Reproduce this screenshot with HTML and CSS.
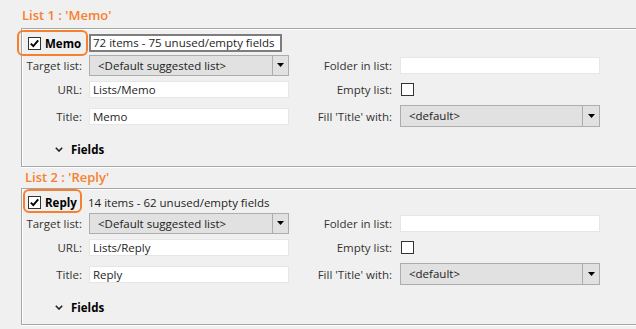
FILE: index.html
```html
<!DOCTYPE html>
<html>
<head>
<meta charset="utf-8">
<title>Lists</title>
<link rel="stylesheet" href="styles.css">
</head>
<body>
<div class="page">
  <div class="list-title first">List 1 : 'Memo'</div>
  <section class="group">
    <div class="header">
      <label class="check-label ring-memo">
        <span class="box"><svg width="11" height="11" viewBox="0 0 11 11"><polyline points="1.8,5.6 4.3,8.2 9.2,2.4" fill="none" stroke="#000" stroke-width="1.9"/></svg></span>
        <span class="name">Memo</span>
      </label>
      <div class="info framed">72 items - 75 unused/empty fields</div>
    </div>
    <div class="form">
      <span class="lbl">Target list:</span>
      <div class="combo"><span class="combo-text">&lt;Default suggested list&gt;</span><span class="combo-btn"><svg width="7" height="4" viewBox="0 0 7 4"><polygon points="0,0 7,0 3.5,4" fill="#000"/></svg></span></div>
      <span class="lbl lbl-right">Folder in list:</span>
      <div class="input"></div>
      <span class="lbl">URL:</span>
      <div class="input">Lists/Memo</div>
      <span class="lbl lbl-right">Empty list:</span>
      <div class="cell"><span class="box"></span></div>
      <span class="lbl">Title:</span>
      <div class="input">Memo</div>
      <span class="lbl lbl-right">Fill 'Title' with:</span>
      <div class="combo combo-right"><span class="combo-text">&lt;default&gt;</span><span class="combo-btn"><svg width="7" height="4" viewBox="0 0 7 4"><polygon points="0,0 7,0 3.5,4" fill="#000"/></svg></span></div>
    </div>
    <div class="fields"><svg class="chev" width="8" height="5" viewBox="0 0 8 5"><polyline points="0.8,0.8 4,4 7.2,0.8" fill="none" stroke="#222" stroke-width="1.6"/></svg><span>Fields</span></div>
  </section>

  <div class="list-title second">List 2 : 'Reply'</div>
  <section class="group">
    <div class="header">
      <label class="check-label ring-reply">
        <span class="box"><svg width="11" height="11" viewBox="0 0 11 11"><polyline points="1.8,5.6 4.3,8.2 9.2,2.4" fill="none" stroke="#000" stroke-width="1.9"/></svg></span>
        <span class="name">Reply</span>
      </label>
      <div class="info plain">14 items - 62 unused/empty fields</div>
    </div>
    <div class="form">
      <span class="lbl">Target list:</span>
      <div class="combo"><span class="combo-text">&lt;Default suggested list&gt;</span><span class="combo-btn"><svg width="7" height="4" viewBox="0 0 7 4"><polygon points="0,0 7,0 3.5,4" fill="#000"/></svg></span></div>
      <span class="lbl lbl-right">Folder in list:</span>
      <div class="input"></div>
      <span class="lbl">URL:</span>
      <div class="input">Lists/Reply</div>
      <span class="lbl lbl-right">Empty list:</span>
      <div class="cell"><span class="box"></span></div>
      <span class="lbl">Title:</span>
      <div class="input">Reply</div>
      <span class="lbl lbl-right">Fill 'Title' with:</span>
      <div class="combo combo-right"><span class="combo-text">&lt;default&gt;</span><span class="combo-btn"><svg width="7" height="4" viewBox="0 0 7 4"><polygon points="0,0 7,0 3.5,4" fill="#000"/></svg></span></div>
    </div>
    <div class="fields"><svg class="chev" width="8" height="5" viewBox="0 0 8 5"><polyline points="0.8,0.8 4,4 7.2,0.8" fill="none" stroke="#222" stroke-width="1.6"/></svg><span>Fields</span></div>
  </section>
</div>
</body>
</html>
```

FILE: styles.css
```css
html, body {
  margin: 0;
  padding: 0;
  overflow: hidden;
  background: #f0f0f0;
}
body {
  font-family: "Open Sans", "Noto Sans", sans-serif;
  font-size: 11.5px;
  color: #1e1e1e;
}
.page {
  width: 636px;
  height: 329px;
  overflow: hidden;
}
.list-title {
  color: #f7802f;
  font-size: 13px;
  font-weight: 600;
  line-height: 21px;
  height: 21px;
}
.list-title.first {
  padding-top: 5px;
  margin-bottom: 2px;
  padding-left: 22px;
}
.list-title.second {
  padding-left: 25px;
}
.group {
  margin-left: 21px;
  width: 640px;
  border: 1px solid #a6a6a6;
  box-shadow: inset 1px 1px 0 #fff, 0 1px 0 #fff;
  padding: 3px 0 7px 0;
  box-sizing: border-box;
}
.header {
  display: grid;
  grid-template-columns: 67px auto;
  align-items: center;
}
.check-label {
  position: relative;
  display: flex;
  align-items: center;
  gap: 4px;
  padding-left: 6px;
  height: 20px;
}
.check-label::after {
  content: "";
  position: absolute;
  border: 2.5px solid #f7802f;
  border-radius: 6px;
  box-sizing: border-box;
}
.ring-memo::after {
  left: -5px;
  top: -3px;
  width: 71px;
  height: 26px;
}
.ring-reply::after {
  left: 1px;
  top: -3px;
  width: 59px;
  height: 24px;
}
.box {
  width: 13px;
  height: 13px;
  box-sizing: border-box;
  border: 1px solid #333;
  background: #fff;
  display: flex;
  align-items: center;
  justify-content: center;
  flex: none;
}
.name {
  font-weight: 700;
  color: #000;
}
.info {
  white-space: nowrap;
}
.info.framed {
  width: 193px;
  box-sizing: border-box;
  border: 2px solid #7d7d7d;
  background: #fff;
  padding: 0 2px;
  line-height: 14px;
  margin: 2px 0;
}
.info.plain {
  margin-left: -1px;
}
.form {
  display: grid;
  grid-template-columns: 67px 200px 111px 200px;
  grid-template-rows: 22px 27px 26px;
  align-items: center;
}
.lbl {
  text-align: right;
  padding-right: 7px;
  color: #333;
  white-space: nowrap;
}
.lbl-right {
  padding-right: 8px;
}
.combo {
  height: 21px;
  box-sizing: border-box;
  border: 1px solid #adadad;
  background: #e1e1e1;
  display: flex;
  align-items: stretch;
}
.combo-right {
  height: 22px;
}
.combo-text {
  flex: 1;
  padding-left: 8px;
  line-height: 19px;
  color: #222;
}
.combo-btn {
  width: 15px;
  border-left: 1px solid #adadad;
  display: flex;
  align-items: center;
  justify-content: center;
}
.combo-right .combo-btn {
  width: 16px;
}
.input {
  height: 17px;
  box-sizing: border-box;
  background: #fff;
  border: 1px solid #e6e6e6;
  padding-left: 3px;
  line-height: 15px;
  color: #1e1e1e;
}
.cell {
  display: flex;
  padding-left: 1px;
}
.fields {
  margin-top: 10px;
  height: 20px;
  display: flex;
  align-items: center;
  padding-left: 33px;
  gap: 8px;
  font-weight: 700;
  color: #000;
}
.chev {
  display: block;
}
```
